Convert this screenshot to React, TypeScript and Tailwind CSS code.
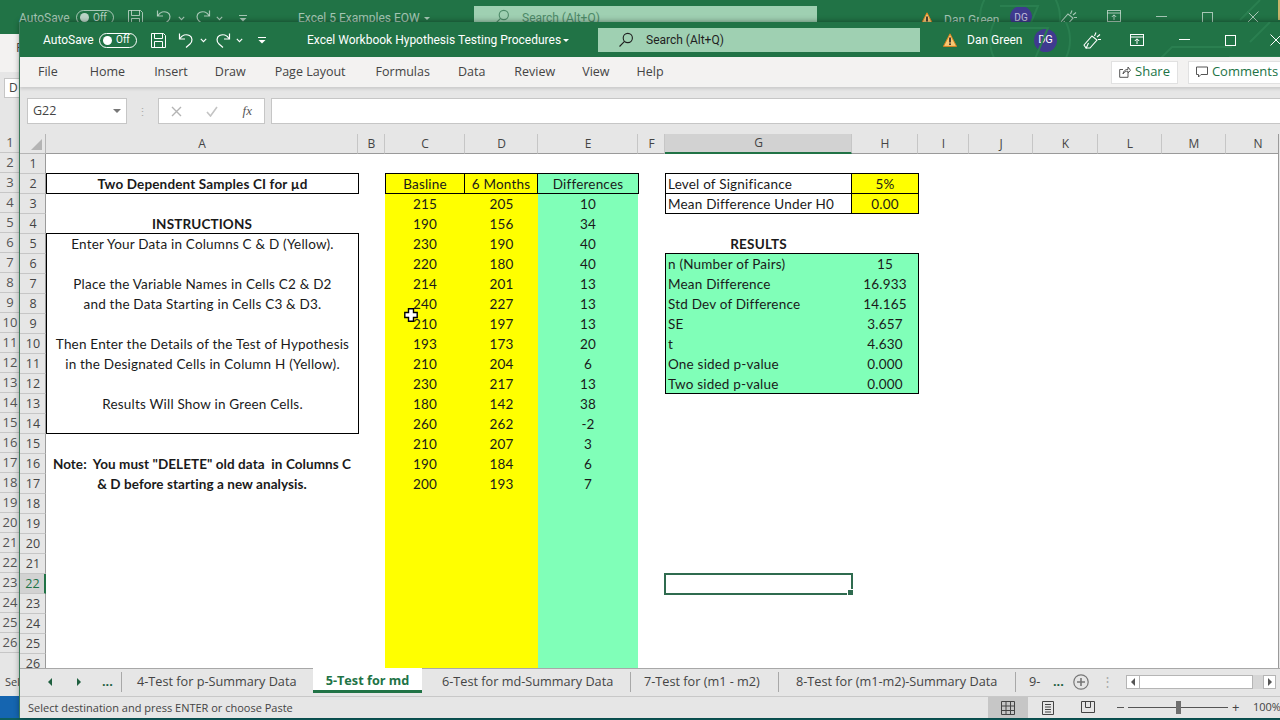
import { Fragment } from 'react';

const COLS = ['A', 'B', 'C', 'D', 'E', 'F', 'G', 'H', 'I', 'J', 'K', 'L', 'M', 'N'];
const ROW_NUMS = Array.from({ length: 26 }, (_, i) => i + 1);

const DATA: [number, number, number][] = [
  [215, 205, 10], [190, 156, 34], [230, 190, 40], [220, 180, 40], [214, 201, 13],
  [240, 227, 13], [210, 197, 13], [193, 173, 20], [210, 204, 6], [230, 217, 13],
  [180, 142, 38], [260, 262, -2], [210, 207, 3], [190, 184, 6], [200, 193, 7],
];

const INSTRUCTIONS: Record<number, string> = {
  5: 'Enter Your Data in Columns C & D (Yellow).',
  7: 'Place the Variable Names in Cells C2 & D2',
  8: 'and the Data Starting in Cells C3 & D3.',
  10: 'Then Enter the Details of the Test of Hypothesis',
  11: 'in the Designated Cells in Column H (Yellow).',
  13: 'Results Will Show in Green Cells.',
};

const RESULTS: [string, string][] = [
  ['n (Number of Pairs)', '15'],
  ['Mean Difference', '16.933'],
  ['Std Dev of Difference', '14.165'],
  ['SE', '3.657'],
  ['t', '4.630'],
  ['One sided p-value', '0.000'],
  ['Two sided p-value', '0.000'],
];

const RIBBON_TABS: [string, string][] = [
  ['File', 'ml-0'],
  ['Home', 'ml-[32px]'],
  ['Insert', 'ml-[29px]'],
  ['Draw', 'ml-[27px]'],
  ['Page Layout', 'ml-[29px]'],
  ['Formulas', 'ml-[30px]'],
  ['Data', 'ml-[28px]'],
  ['Review', 'ml-[29px]'],
  ['View', 'ml-[27px]'],
  ['Help', 'ml-[27px]'],
];

const cellBase = 'flex items-center justify-center whitespace-pre min-w-0 box-border';

const AutoSave = ({ dim }: { dim?: boolean }) => (
  <div className={`w-[38px] h-[15px] rounded-full border ${dim ? 'border-white/60' : 'border-white'} flex items-center pl-[3px] gap-[4px]`}>
    <span className={`w-[9px] h-[9px] rounded-full ${dim ? 'bg-white/70' : 'bg-white'}`} />
    <span className={`text-[10px] leading-none ${dim ? 'text-white/70' : 'text-white'}`}>Off</span>
  </div>
);

const SaveIcon = () => (
  <svg width="17" height="17" viewBox="0 0 17 17" fill="none" stroke="currentColor" strokeWidth="1">
    <path d="M1.5 1.5h12l2 2v12h-14z" />
    <path d="M4.5 1.5v5h8v-5M4.5 15.5v-6h8v6" />
  </svg>
);

const UndoIcon = () => (
  <svg width="16" height="17" viewBox="0 0 16 17" fill="none" stroke="currentColor" strokeWidth="1.2">
    <path d="M1.5 1.5v5.5h5.5" />
    <path d="M1.8 6.8C4 3 8 2 11.5 3.5c3.2 1.6 3.2 6.3 0.5 8.5l-4 3.5" />
  </svg>
);

const RedoIcon = () => (
  <svg width="16" height="17" viewBox="0 0 16 17" fill="none" stroke="currentColor" strokeWidth="1.2">
    <path d="M14.5 1.5v5.5H9" />
    <path d="M14.2 6.8C12 3 8 2 4.5 3.5 1.3 5.1 1.3 9.8 4 12l4 3.5" />
  </svg>
);

const Chevron = () => (
  <svg width="7" height="5" viewBox="0 0 7 5" fill="none" stroke="currentColor" strokeWidth="1.1">
    <path d="M0.8 0.8 3.5 3.6 6.2 0.8" />
  </svg>
);

const QatIcon = () => (
  <svg width="8" height="7" viewBox="0 0 8 7" fill="currentColor">
    <rect x="0" y="0" width="8" height="1" />
    <path d="M0.5 3h7L4 6.5z" />
  </svg>
);

const SearchIcon = () => (
  <svg width="16" height="16" viewBox="0 0 16 16" fill="none" stroke="currentColor" strokeWidth="1.1">
    <circle cx="9.8" cy="6" r="4.6" />
    <path d="M6.5 9.3 1.5 14.5" />
  </svg>
);

const Warning = () => (
  <svg width="14" height="14" viewBox="0 0 14 14">
    <path d="M7 0.8 13.6 13.4H0.4z" fill="#f7c873" stroke="#d9801e" strokeWidth="1" />
    <rect x="6.2" y="4.5" width="1.6" height="5" fill="#222" />
    <rect x="6.2" y="10.4" width="1.6" height="1.6" fill="#222" />
  </svg>
);

const PenIcon = () => (
  <svg width="20" height="20" viewBox="0 0 20 20" fill="none" stroke="currentColor" strokeWidth="1.1">
    <path d="M2 15 10 6l5 4-7 8H4z" />
    <path d="M4 18.5 6.5 13" />
    <path d="M12.5 6 14 2.5M15 7l3-2.5M16 9.5h3" />
  </svg>
);

const DisplayIcon = () => (
  <svg width="14" height="12" viewBox="0 0 14 12" fill="none" stroke="currentColor" strokeWidth="1">
    <rect x="0.5" y="0.5" width="13" height="11" />
    <path d="M0.5 3h13" />
    <path d="M7 10V5M4.8 7 7 4.8 9.2 7" />
  </svg>
);

const WinButtons = ({ gap }: { gap: string }) => (
  <div className={`flex items-center ${gap}`}>
    <svg width="12" height="2" viewBox="0 0 12 2"><rect width="11" height="1" fill="currentColor" /></svg>
    <svg width="11" height="11" viewBox="0 0 11 11" fill="none" stroke="currentColor"><rect x="0.5" y="0.5" width="10" height="10" /></svg>
    <svg width="12" height="12" viewBox="0 0 12 12" fill="none" stroke="currentColor"><path d="M0.5 0.5l11 11M11.5 0.5l-11 11" /></svg>
  </div>
);

const CircuitLines = () => (
  <svg className="absolute right-0 top-0 pointer-events-none" width="330" height="57" viewBox="0 0 330 57" fill="none" stroke="#2a7f50" strokeWidth="2">
    <circle cx="70" cy="18" r="40" />
    <path d="M50 6h38l-16 38" />
    <path d="M180 57l32-32h60M250 57l20-22h60M290 20l20-20" />
  </svg>
);

const BackWindow = () => (
  <div className="absolute inset-0 flex flex-col bg-[#e6e6e6] text-[#444]">
    <div className="relative h-[34px] shrink-0 bg-[#217346] flex items-start pt-[9px] text-white/60 text-[12px] font-['Roboto',sans-serif] overflow-hidden">
      <CircuitLines />
      <span className="absolute right-0 top-0 w-[2px] h-[20px] bg-[#c8b46a]" />
      <span className="ml-[19px] w-[49px]">AutoSave</span>
      <div className="ml-[8px] mt-[1px]"><AutoSave dim /></div>
      <div className="ml-[13px]"><SaveIcon /></div>
      <div className="ml-[12px]"><UndoIcon /></div>
      <div className="ml-[6px] mt-[7px]"><Chevron /></div>
      <div className="ml-[10px]"><RedoIcon /></div>
      <div className="ml-[5px] mt-[7px]"><Chevron /></div>
      <div className="ml-[16px] mt-[6px]"><QatIcon /></div>
      <span className="ml-[51px] w-[118px] whitespace-nowrap">Excel 5 Examples EOW</span>
      <span className="ml-[8px] mt-[8px] border-x-[3px] border-t-[3px] border-x-transparent border-t-white/60" />
      <div className="ml-[44px] -mt-[3px] w-[343px] h-[30px] bg-[#9fd0b2] flex items-start pt-[3px] pl-[20px] gap-[12px] text-[#4d8a68]">
        <SearchIcon />
        <span>Search (Alt+Q)</span>
      </div>
      <div className="ml-[103px] mt-[3px]"><Warning /></div>
      <span className="ml-[10px] mt-[2px] w-[54px] whitespace-nowrap">Dan Green</span>
      <span className="ml-[12px] -mt-[3px] w-[22px] h-[22px] rounded-full bg-[#3f3a8f] flex items-center justify-center text-[10px] text-white/70">DG</span>
      <div className="ml-[26px] -mt-[1px]"><PenIcon /></div>
      <div className="ml-[29px] mt-[1px]"><DisplayIcon /></div>
      <div className="ml-[35px] mt-[2px]"><WinButtons gap="gap-[34px]" /></div>
    </div>
    <div className="h-[38px] shrink-0 bg-[#f3f2f1] pl-[16px] pt-[4px] text-[13px]">F</div>
    <div className="h-[27px] shrink-0 pl-[4px] pt-[6px]">
      <div className="w-[20px] h-[20px] bg-white border border-[#c6c6c6] text-[12px] pl-[4px]">D</div>
    </div>
    <div className="mt-[34px] w-[20px] flex flex-col text-[13px] text-[#555]">
      {ROW_NUMS.map((n) => (
        <div key={n} className="h-[20px] shrink-0 flex items-center justify-center border-b border-[#c6c6c6]">{n}</div>
      ))}
    </div>
    <div className="absolute left-0 top-[668px] w-[20px] h-[28px] pl-[5px] text-[11px] flex items-center bg-[#e6e6e6]">Sel</div>
    <div className="absolute left-0 top-[696px] w-full h-[24px] bg-[#1565b0]" />
    <div className="absolute left-0 top-[718px] w-full h-[2px] bg-[#0d5f5f]" />
  </div>
);

const TitleBar = () => (
  <div className="relative h-[35px] shrink-0 pt-px bg-[#217346] text-white text-[12px] font-['Roboto',sans-serif] flex items-center overflow-hidden">
    <CircuitLines />
    <span className="ml-[23px] w-[49px]">AutoSave</span>
    <div className="ml-[7px]"><AutoSave /></div>
    <div className="ml-[13px]"><SaveIcon /></div>
    <div className="ml-[11px]"><UndoIcon /></div>
    <div className="ml-[6px]"><Chevron /></div>
    <div className="ml-[8px]"><RedoIcon /></div>
    <div className="ml-[5px]"><Chevron /></div>
    <div className="ml-[15px]"><QatIcon /></div>
    <span className="ml-[41px] w-[250px] whitespace-nowrap">Excel Workbook Hypothesis Testing Procedures</span>
    <span className="ml-[6px] border-x-[3px] border-t-[3px] border-x-transparent border-t-white" />
    <div className="ml-[29px] w-[322px] h-[24px] bg-[#9fd0b2] flex items-center pl-[20px] gap-[12px] text-[#1f1f1f]">
      <SearchIcon />
      <span>Search (Alt+Q)</span>
    </div>
    <div className="ml-[23px]"><Warning /></div>
    <span className="ml-[10px] w-[56px] whitespace-nowrap">Dan Green</span>
    <span className="ml-[11px] w-[23px] h-[23px] rounded-full bg-[#3f3a8f] flex items-center justify-center text-[11px]">DG</span>
    <div className="ml-[25px]"><PenIcon /></div>
    <div className="ml-[28px]"><DisplayIcon /></div>
    <div className="ml-[35px]"><WinButtons gap="gap-[34px]" /></div>
  </div>
);

const RibbonTabs = () => (
  <div className="h-[30px] shrink-0 bg-[#f3f2f1] flex items-center pl-[18px] pr-[4px] text-[12.5px] text-[#444] shadow-[0_2px_3px_rgba(0,0,0,0.12)] relative">
    <div className="flex pt-px">
      {RIBBON_TABS.map(([t, ml]) => (
        <span key={t} className={ml}>{t}</span>
      ))}
    </div>
    <div className="ml-auto flex gap-[10px] text-[#217346] text-[13px]">
      <div className="h-[23px] w-[67px] bg-white border border-[#e1e1e1] flex items-center justify-center gap-[4px]">
        <svg width="12" height="12" viewBox="0 0 12 12" fill="none" stroke="#555"><path d="M9 6.5v4.8H0.7V3.5H4" /><path d="M4 8c.3-3 2.500-4.700 5-4.700V1l2.500 3.300L9 7V5.200C7 5 5 6 4 8z" /></svg>
        Share
      </div>
      <div className="h-[23px] w-[98px] bg-white border border-[#e1e1e1] flex items-center justify-center gap-[4px]">
        <svg width="12" height="12" viewBox="0 0 12 12" fill="none" stroke="#555"><path d="M0.500 1h11v7.500H5l-2.500 2.500V8.500h-2z" /></svg>
        Comments
      </div>
    </div>
  </div>
);

const FormulaBar = () => (
  <div className="h-[47px] shrink-0 bg-[#e6e6e6] flex items-start pt-[11px] pl-[7px] text-[#444]">
    <div className="w-[100px] h-[26px] bg-white border border-[#c6c6c6] flex items-center pl-[5px] text-[12.5px]">
      G22
      <span className="ml-auto mr-[5px] border-x-[4px] border-t-[4px] border-x-transparent border-t-[#777]" />
    </div>
    <div className="w-[31px] h-[26px] flex items-center justify-center text-[#aaa] text-[11px] leading-none">⋮</div>
    <div className="w-[107px] h-[26px] bg-white border border-[#c6c6c6] flex items-center justify-between px-[12px]">
      <svg width="11" height="11" viewBox="0 0 11 11" stroke="#b4b4b4" strokeWidth="1.4"><path d="M1 1l9 9M10 1l-9 9" /></svg>
      <svg width="12" height="11" viewBox="0 0 12 11" fill="none" stroke="#c4c4c4" strokeWidth="1.6"><path d="M1 6l3.500 4L11 1" /></svg>
      <span className="font-['Liberation_Serif',serif] italic text-[13px] text-[#555]">fx</span>
    </div>
    <div className="ml-[6px] flex-1 h-[26px] bg-white border border-[#c6c6c6]" />
  </div>
);

const Cursor = () => (
  <svg className="absolute left-[384px] top-[174px] pointer-events-none" width="14" height="14" viewBox="0 0 14 14">
    <path d="M4.500 0.800h5v3.700h3.700v5H9.500v3.700h-5V9.500H0.800v-5h3.700z" fill="#fff" stroke="#000" strokeWidth="1.400" />
  </svg>
);

const aCell = (row: number) => {
  if (row === 2) {
    return <div className={`${cellBase} -mt-px -mr-px pt-px font-bold tracking-[0.15px] border border-black`}>Two Dependent Samples CI for µd</div>;
  }
  if (row === 4) return <div className={`${cellBase} font-bold tracking-[0.15px]`}>INSTRUCTIONS</div>;
  if (row === 16) return <div className={`${cellBase} font-bold tracking-[0.07px]`}>{'Note:  You must "DELETE" old data  in Columns C'}</div>;
  if (row === 17) return <div className={`${cellBase} font-bold tracking-[0.07px]`}>& D before starting a new analysis.</div>;
  if (row >= 5 && row <= 14) {
    const edge = row === 5 ? '-mt-px pt-px border-t' : row === 14 ? 'border-b' : '';
    return <div className={`${cellBase} -mr-px border-x border-black ${edge}`}>{INSTRUCTIONS[row] ?? ''}</div>;
  }
  return <div />;
};

const dataCell = (col: number, row: number) => {
  const bg = col === 2 ? 'bg-[#80ffb8]' : 'bg-[#ffff00]';
  if (row === 2) {
    const label = ['Basline', '6 Months', 'Differences'][col];
    const edge = col === 0 ? 'border' : 'border-y border-r';
    const out = col === 2 ? '-mr-px' : '';
    return <div className={`${cellBase} -mt-px pt-px ${bg} ${edge} ${out} border-black`}>{label}</div>;
  }
  if (row >= 3) {
    const rec = DATA[row - 3];
    return <div className={`${cellBase} ${bg}`}>{rec ? rec[col] : ''}</div>;
  }
  return <div />;
};

const gCell = (row: number) => {
  if (row === 2) return <div className={`${cellBase} !justify-start -mt-px pt-px pl-[2px] border border-black`}>Level of Significance</div>;
  if (row === 3) return <div className={`${cellBase} !justify-start pt-px pl-[2px] border-x border-b border-black`}>Mean Difference Under H0</div>;
  if (row === 5) return <div className={`${cellBase} font-bold`}>RESULTS</div>;
  if (row >= 6 && row <= 12) {
    const edge = row === 6 ? '-mt-px pt-px border-t' : row === 12 ? 'pt-px border-b' : '';
    return <div className={`${cellBase} !justify-start pl-[2px] bg-[#80ffb8] border-l border-black ${edge}`}>{RESULTS[row - 6][0]}</div>;
  }
  if (row === 22) {
    return (
      <div className="relative -m-px border-2 border-[#2f6b4f]">
        <span className="absolute -right-[3px] -bottom-[3px] w-[5px] h-[5px] bg-[#2f6b4f] border border-white box-content" />
      </div>
    );
  }
  return <div />;
};

const hCell = (row: number) => {
  if (row === 2) return <div className={`${cellBase} -mt-px -mr-px pt-px bg-[#ffff00] border-y border-r border-black`}>5%</div>;
  if (row === 3) return <div className={`${cellBase} -mr-px pt-px bg-[#ffff00] border-b border-r border-black`}>0.00</div>;
  if (row >= 6 && row <= 12) {
    const edge = row === 6 ? '-mt-px pt-px border-t' : row === 12 ? 'pt-px border-b' : '';
    return <div className={`${cellBase} -mr-px bg-[#80ffb8] border-r border-black ${edge}`}>{RESULTS[row - 6][1]}</div>;
  }
  return <div />;
};

const Sheet = () => (
  <div className="relative h-[534px] shrink-0 w-[1259px] overflow-hidden bg-white border-r border-[#9a9a9a] font-['Lato',sans-serif] text-[13.5px] tracking-[0.2px] text-[#1a1a1a]">
    <div className="grid grid-cols-[26px_312px_27px_80px_73px_100px_27px_187px_66px_51px_64px_65px_64px_64px_64px] auto-rows-[20px]">
      <div className="relative bg-[#e6e6e6] border-b border-r border-[#b5b5b5]">
        <span className="absolute right-[3px] bottom-[3px] border-l-[11px] border-b-[11px] border-l-transparent border-b-[#b4b4b4]" />
      </div>
      {COLS.map((c) => (
        <div
          key={c}
          className={`flex items-center justify-center pl-px font-['Open_Sans',sans-serif] text-[12px] tracking-normal text-[#444] ${
            c === 'G' ? 'bg-[#d2d2d2] border-b-2 border-b-[#217346]' : 'bg-[#e6e6e6] border-b border-[#9a9a9a]'
          } border-r border-r-[#c6c6c6]`}
        >
          {c}
        </div>
      ))}
      {ROW_NUMS.map((r) => (
        <Fragment key={r}>
          <div
            className={`flex items-center justify-center pl-px pt-[2px] font-['Open_Sans',sans-serif] text-[12.5px] tracking-normal border-b border-b-[#c6c6c6] ${
              r === 22 ? 'bg-[#d2d2d2] text-[#217346] border-r-2 border-r-[#217346]' : 'bg-[#e6e6e6] text-[#444] border-r border-r-[#9a9a9a]'
            }`}
          >
            {r}
          </div>
          {aCell(r)}
          <div />
          {dataCell(0, r)}
          {dataCell(1, r)}
          {dataCell(2, r)}
          <div />
          {gCell(r)}
          {hCell(r)}
          <div />
          <div />
          <div />
          <div />
          <div />
          <div />
        </Fragment>
      ))}
    </div>
    <Cursor />
  </div>
);

const TabSep = () => <span className="block w-px h-[20px] bg-[#a8a8a8] shrink-0" />;

const SheetTabs = () => (
  <div className="h-[28px] shrink-0 pb-px bg-[#e6e6e6] border-t border-[#a8a8a8] flex items-center text-[12.7px] text-[#444] font-['Open_Sans',sans-serif] whitespace-nowrap">
    <span className="ml-[28px] border-y-[4px] border-r-[4px] border-y-transparent border-r-[#1f5f3f]" />
    <span className="ml-[25px] border-y-[4px] border-l-[4px] border-y-transparent border-l-[#1f5f3f]" />
    <span className="ml-[21px] w-[13px] font-bold text-[#1f5f3f]">...</span>
    <span className="ml-[6px]"><TabSep /></span>
    <span className="ml-[15px] w-[160px]">4-Test for p-Summary Data</span>
    <div className="ml-[16px] w-[109px] h-[25px] self-start -mt-px pt-[3px] bg-white border-b-[3px] border-[#217346] flex items-center justify-center font-bold text-[#217346]">5-Test for md</div>
    <span className="ml-[20px] w-[170px]">6-Test for md-Summary Data</span>
    <span className="ml-[18px]"><TabSep /></span>
    <span className="ml-[13px] w-[118px]">7-Test for (m1 - m2)</span>
    <span className="ml-[16px]"><TabSep /></span>
    <span className="ml-[17px] w-[200px]">8-Test for (m1-m2)-Summary Data</span>
    <span className="ml-[19px]"><TabSep /></span>
    <span className="ml-[13px] w-[12px]">9-</span>
    <span className="ml-[12px] w-[13px] font-bold text-[#1f5f3f]">...</span>
    <svg className="ml-[7px] shrink-0" width="16" height="16" viewBox="0 0 16 16" fill="none" stroke="#777" strokeWidth="1.200">
      <circle cx="8" cy="8" r="7.200" />
      <path d="M8 4v8M4 8h8" strokeWidth="1.600" />
    </svg>
    <span className="ml-[12px] w-[10px] text-center text-[#aaa]">⋮</span>
    <div className="ml-[15px] w-[150px] h-[14px] flex items-stretch bg-[#d6d6d6] shrink-0">
      <div className="w-[14px] bg-white border border-[#b5b5b5] flex items-center justify-center">
        <span className="border-y-[4px] border-r-[4px] border-y-transparent border-r-[#555]" />
      </div>
      <div className="w-[113px] bg-white border-y border-r border-[#b5b5b5]" />
      <div className="ml-auto w-[13px] bg-white border border-[#b5b5b5] flex items-center justify-center">
        <span className="border-y-[4px] border-l-[4px] border-y-transparent border-l-[#555]" />
      </div>
    </div>
  </div>
);

const StatusBar = () => (
  <div className="h-[22px] shrink-0 bg-[#e6e6e6] border-t border-[#c8c8c8] flex items-center text-[11px] text-[#444] font-['Open_Sans',sans-serif] whitespace-nowrap">
    <span className="ml-[8px] mt-px w-[320px]">Select destination and press ENTER or choose Paste</span>
    <div className="ml-[640px] w-[40px] h-[21px] bg-[#c6c6c6] flex items-center justify-center">
      <svg width="14" height="14" viewBox="0 0 14 14" fill="none" stroke="#444"><path d="M.5.5h13v13H.5zM5 .5v13M9.500.5v13M.5 5h13M.5 9.500h13" /></svg>
    </div>
    <svg className="ml-[13px]" width="14" height="14" viewBox="0 0 14 14" fill="none" stroke="#444"><path d="M1.500.5h11v13h-11zM4 3.500h6M4 6h6M4 8.500h6M4 11h6" /></svg>
    <svg className="ml-[26px]" width="14" height="14" viewBox="0 0 14 14" fill="none" stroke="#444"><path d="M.5.5h13v11H.5zM4.500.5v6h5v-6" /></svg>
    <span className="ml-[22px] w-[7px] h-px bg-[#555]" />
    <div className="relative ml-[4px] w-[100px] h-px bg-[#555]">
      <span className="absolute left-[48px] -top-[6px] w-[5px] h-[13px] bg-[#6f6f6f]" />
    </div>
    <span className="ml-[4px] w-[9px] text-[13px] leading-none">+</span>
    <span className="ml-[12px]">100%</span>
  </div>
);

const App = () => (
  <div className="relative w-[1280px] h-[720px] overflow-hidden font-['Open_Sans',sans-serif]">
    <BackWindow />
    <div className="absolute left-[20px] top-[22px] w-[1270px] h-[696px] flex flex-col shadow-[-1px_0_0_#3b7a5a,0_0_6px_rgba(0,0,0,0.45)]">
      <TitleBar />
      <RibbonTabs />
      <FormulaBar />
      <Sheet />
      <SheetTabs />
      <StatusBar />
    </div>
  </div>
);

export default App;
